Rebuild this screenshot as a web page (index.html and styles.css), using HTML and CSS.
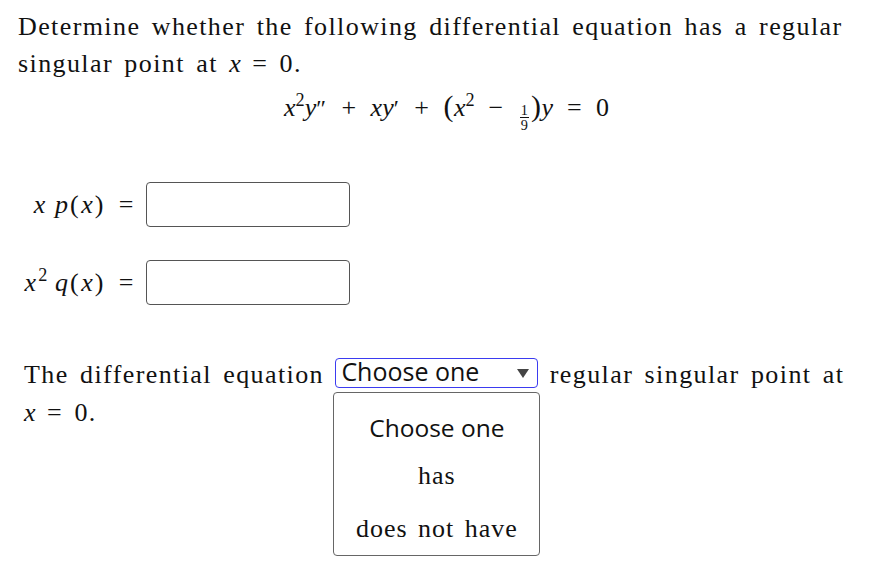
FILE: index.html
```html
<!DOCTYPE html>
<html>
<head>
<meta charset="utf-8">
<link rel="stylesheet" href="styles.css">
</head>
<body>
<div class="page">
  <p class="intro">Determine whether the following differential equation has a regular<br>singular point at <span class="m"><i>x</i> = 0</span>.</p>
  <div class="eq">
    <i>x</i><sup>2</sup><i>y</i><span class="pr">″</span> + <i>x</i><i>y</i><span class="pr">′</span> + <span class="paren">(</span><i>x</i><sup>2</sup> − <span class="frac"><span class="num">1</span><span class="den">9</span></span><span class="paren">)</span><i>y</i> = 0
  </div>
  <div class="answers">
    <div class="lbl"><i>x</i>&#8201;<i>p</i>(<i>x</i>) =</div>
    <div class="box"></div>
    <div class="lbl"><i>x</i><sup>2</sup>&#8201;<i>q</i>(<i>x</i>) =</div>
    <div class="box"></div>
  </div>
  <div class="concl">
    <div class="line">The differential equation <div class="selwrap"><div class="sel"><span class="seltext">Choose one</span><span class="arrow"></span></div><div class="menu"><div class="opt sans">Choose one</div><div class="opt">has</div><div class="opt">does not have</div></div></div> regular singular point at</div>
    <div class="line"><span class="m"><i>x</i> = 0</span>.</div>
  </div>
</div>
</body>
</html>
```
FILE: styles.css
```css
html, body { margin: 0; padding: 0; background: #fff; }
body { font-family: "Liberation Serif", "DejaVu Serif", serif; color: #111; min-height: 567px; }
.page { padding: 8px 0 0 18px; }
.intro { margin: 0; font-size: 26px; line-height: 37px; letter-spacing: 1.4px; word-spacing: 3.5px; }
i { font-family: "Liberation Serif", serif; font-style: italic; letter-spacing: 0; }
sup { font-size: 0.7em; line-height: 0; vertical-align: 0.55em; letter-spacing: 0; }
.eq { font-size: 26px; margin: 4px 0 0 266px; line-height: 40px; white-space: nowrap; word-spacing: 7px; letter-spacing: 0.5px; }
.pr { font-size: 0.9em; margin-right: 1px; }
.paren { font-size: 1.15em; }
.frac { display: inline-flex; flex-direction: column; align-items: center; font-size: 0.55em; line-height: 1; vertical-align: 0.1em; margin: 0 2px; letter-spacing: 0; }
.num { border-bottom: 1px solid #111; padding: 0 1px; }
.answers { display: grid; grid-template-columns: 118px 204px; column-gap: 10px; row-gap: 33px; margin: 50px 0 0 0; align-items: center; font-size: 26px; letter-spacing: 2.5px; word-spacing: 4px; }
.lbl { text-align: right; white-space: nowrap; }
.lbl i { letter-spacing: 2px; }
.box { height: 43px; border: 1px solid #555; border-radius: 4px; }
.concl { margin: 51px 0 0 6px; font-size: 26px; line-height: 38px; letter-spacing: 1.4px; word-spacing: 3.5px; }
.line { white-space: nowrap; }
.selwrap { position: relative; display: inline-block; vertical-align: 2px; letter-spacing: 0; word-spacing: 0; }
.sel { display: flex; align-items: center; justify-content: space-between; width: 203px; height: 30px; box-sizing: border-box; border: 1.5px solid #3b3bf0; border-radius: 4px; padding: 0 8px 0 5px; font-family: "Open Sans", "Noto Sans", sans-serif; font-size: 25px; line-height: 1; }
.seltext { margin-top: -3px; }
.arrow { width: 0; height: 0; border-left: 6px solid transparent; border-right: 6px solid transparent; border-top: 9px solid #444; }
.menu { position: absolute; left: -2px; top: 34px; width: 207px; height: 164px; box-sizing: border-box; border: 1px solid #666; border-radius: 4px; background: #fff; display: flex; flex-direction: column; align-items: center; padding-top: 23px; }
.opt { flex: none; font-family: "Liberation Serif", serif; font-size: 26px; line-height: 1; height: 53px; letter-spacing: 1px; word-spacing: 3px; }
.opt:last-child { height: auto; }
.opt.sans { font-family: "Open Sans", "Noto Sans", sans-serif; font-size: 24.5px; height: 47px; letter-spacing: 0; word-spacing: 0; }
```
